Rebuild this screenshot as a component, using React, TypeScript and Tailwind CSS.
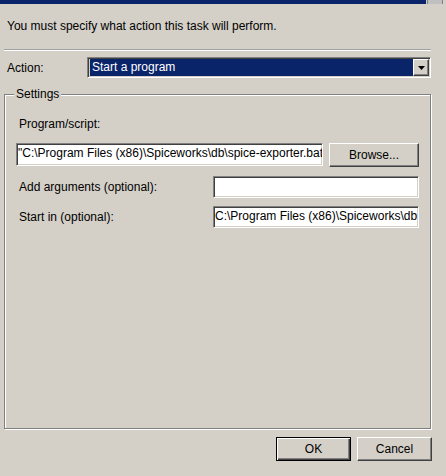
import type { ReactNode } from 'react'

const font = { fontFamily: '"Liberation Sans", Arial, sans-serif' }

/** Campo hundido estilo Windows clásico. */
function TextBox({ w, h, children }: { w: string; h: string; children?: ReactNode }) {
  return (
    <div
      className={`${w} ${h} overflow-hidden whitespace-nowrap border border-t-[#808080] border-l-[#808080] border-b-white border-r-white bg-white pl-[1px] text-[12px] leading-[19px] text-black shadow-[inset_1px_1px_0_#404040,inset_-1px_-1px_0_#d4d0c8]`}
    >
      {children}
    </div>
  )
}

function Button({ label, w, isDefault }: { label: string; w: string; isDefault?: boolean }) {
  return (
    <button
      type="button"
      className={
        isDefault
          ? `${w} h-[24px] border border-black bg-[#d4d0c8] text-[12px] text-black shadow-[inset_1px_1px_0_#ffffff,inset_-1px_-1px_0_#404040,inset_-2px_-2px_0_#808080]`
          : `${w} h-[24px] border border-t-white border-l-white border-b-[#404040] border-r-[#404040] bg-[#d4d0c8] text-[12px] text-black shadow-[inset_-1px_-1px_0_#808080]`
      }
    >
      {label}
    </button>
  )
}

export default function App() {
  return (
    <div className="relative h-[476px] w-[446px] overflow-hidden bg-[#d4d0c8] text-[12px] text-black" style={font}>
      {/* borde inferior de la barra de título */}
      <div className="flex h-[4px]">
        <div className="h-full w-[426px] bg-[#0a246a]" />
        <div className="ml-[1px] h-full w-[16px] border-l border-r border-[#808080] bg-[#c0c0c0]" />
      </div>

      <div className="mt-[15px] h-[14px] pl-[7px] leading-[14px]">You must specify what action this task will perform.</div>

      <div className="ml-[4px] mt-[16px] h-[2px] w-[427px] border-t border-[#a0a0a0] border-b border-b-white" />

      <div className="mt-[6px] flex h-[21px] items-center">
        <span className="w-[87px] pl-[7px]">Action:</span>
        <div className="flex h-[21px] w-[344px] border border-t-[#808080] border-l-[#808080] border-b-white border-r-white shadow-[inset_1px_1px_0_#404040] p-[1px] pl-[2px]">
          <div className="flex-1 bg-[#0a246a] pl-[2px] leading-[17px] text-white">Start a program</div>
          <div className="flex w-[16px] items-center justify-center border border-t-white border-l-white border-b-[#404040] border-r-[#404040] bg-[#d4d0c8] shadow-[inset_-1px_-1px_0_#808080]">
            <svg width="7" height="4" viewBox="0 0 7 4">
              <path d="M0 0h7L3.5 4z" fill="#000" />
            </svg>
          </div>
        </div>
      </div>

      {/* grupo Settings */}
      <div className="relative ml-[4px] mt-[16px] h-[335px] w-[427px] border border-[#808080] shadow-[1px_1px_0_#ffffff,inset_1px_1px_0_#ffffff]">
        <span className="absolute -top-[8px] left-[9px] bg-[#d4d0c8] px-[2px] leading-[14px]">Settings</span>

        <div className="mt-[22px] h-[14px] pl-[14px] leading-[14px]">Program/script:</div>

        <div className="ml-[11px] mt-[12px] flex gap-[6px]">
          <TextBox w="w-[307px]" h="h-[23px]">"C:\Program Files (x86)\Spiceworks\db\spice-exporter.bat"</TextBox>
          <Button label="Browse..." w="w-[90px]" />
        </div>

        <div className="mt-[9px] flex items-center">
          <span className="w-[208px] pl-[14px]">Add arguments (optional):</span>
          <TextBox w="w-[206px]" h="h-[22px]" />
        </div>

        <div className="mt-[8px] flex items-center">
          <span className="w-[208px] pl-[14px]">Start in (optional):</span>
          <TextBox w="w-[206px]" h="h-[22px]">C:\Program Files (x86)\Spiceworks\db</TextBox>
        </div>
      </div>

      <div className="mt-[8px] flex gap-[6px] pl-[276px]">
        <Button label="OK" w="w-[75px]" isDefault />
        <Button label="Cancel" w="w-[75px]" />
      </div>
    </div>
  )
}
